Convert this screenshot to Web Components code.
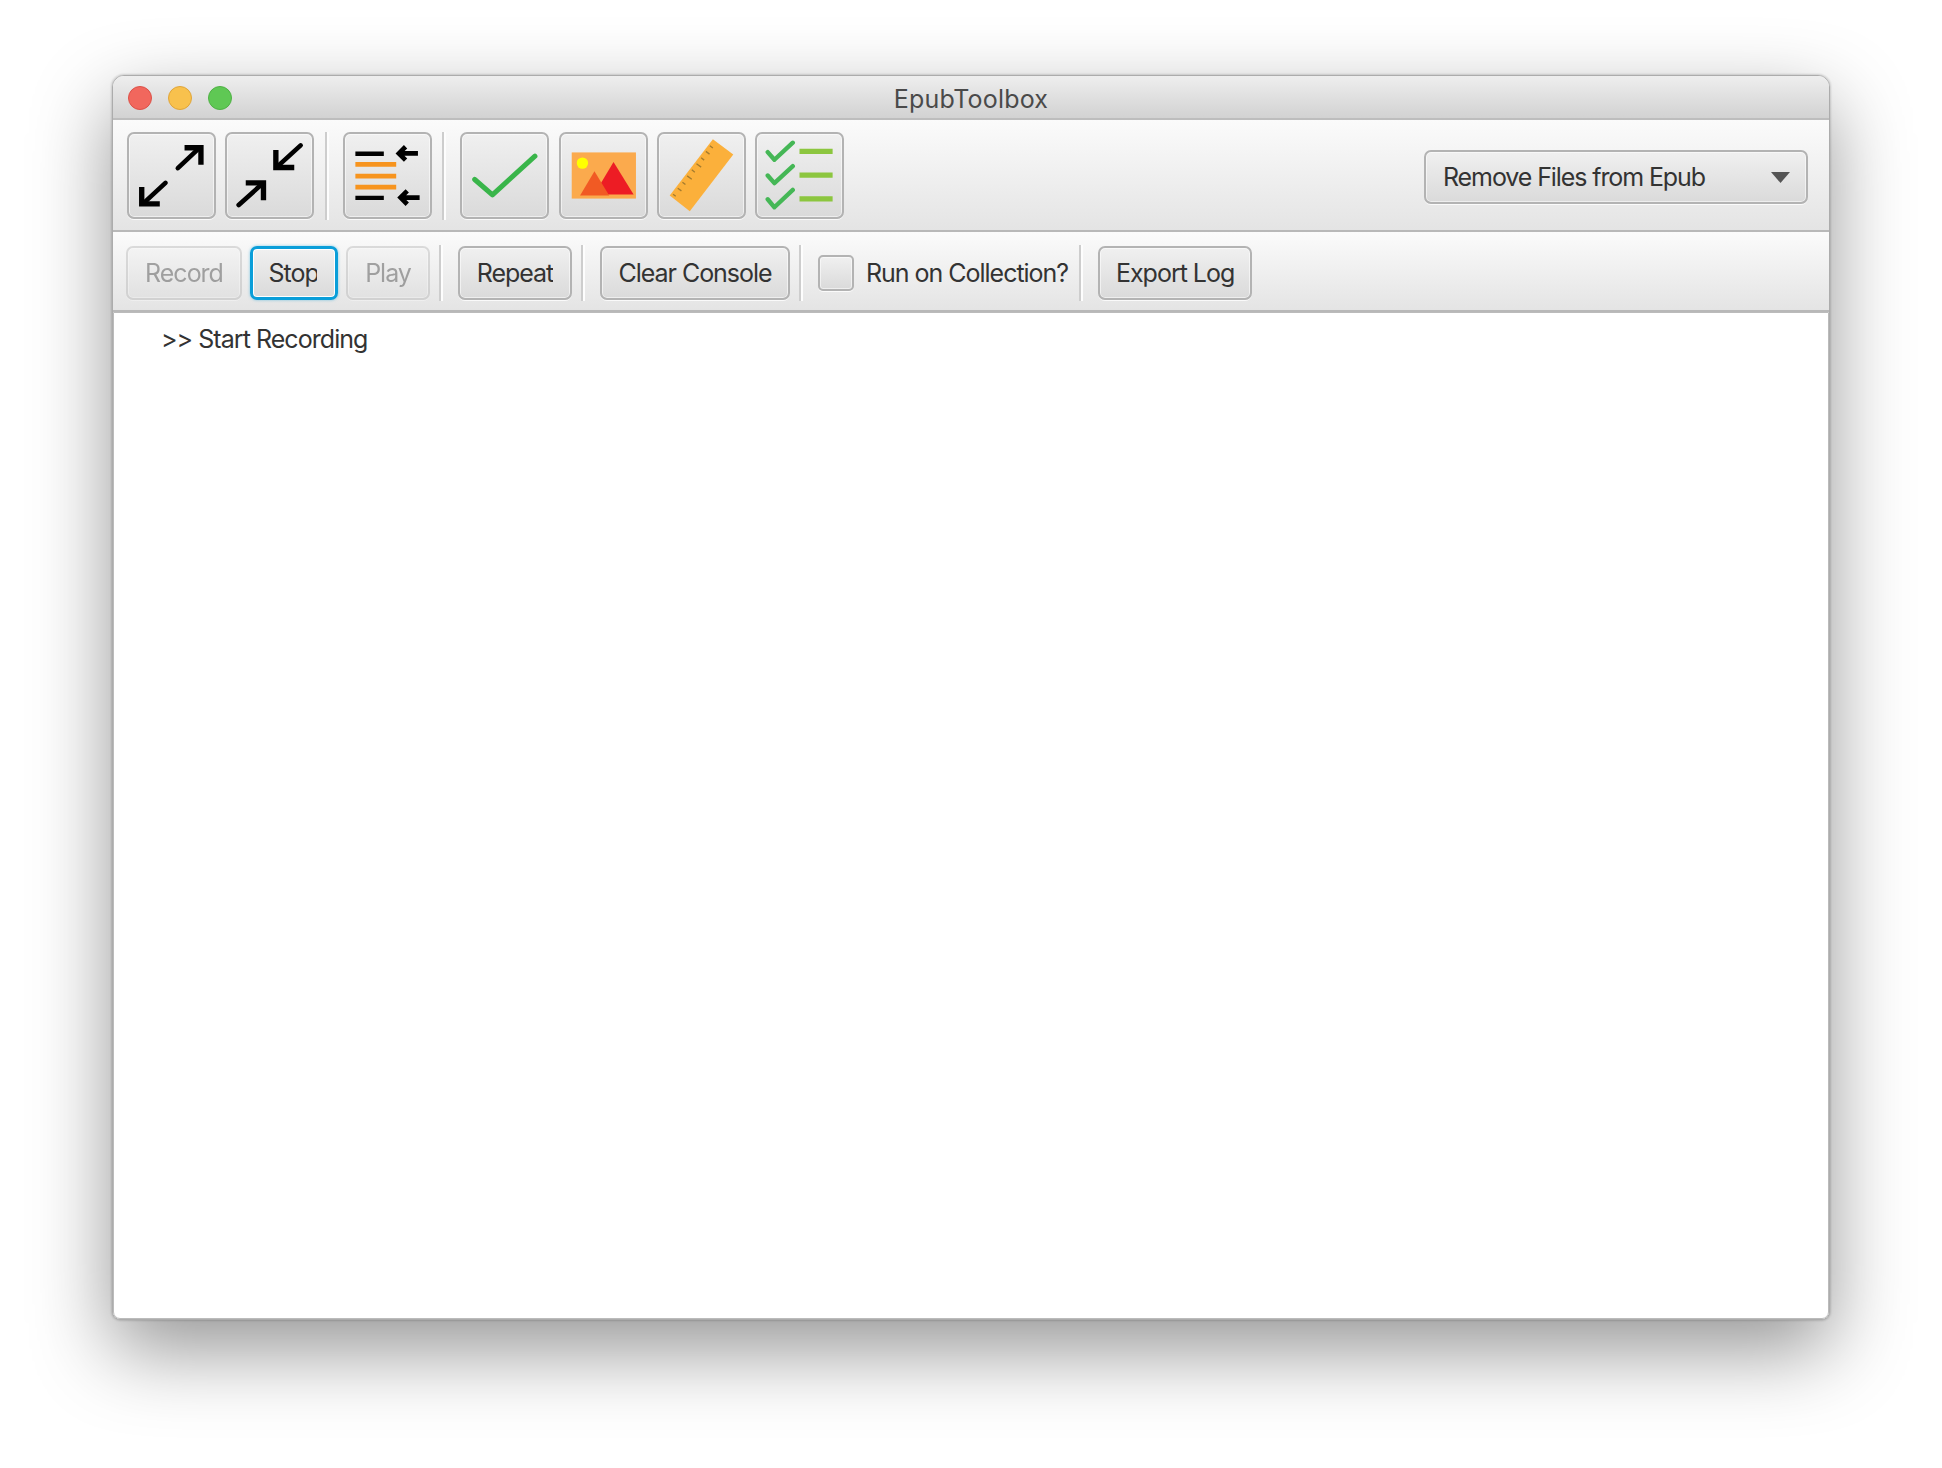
<!DOCTYPE html>
<html>
<head>
<meta charset="utf-8">
<title>EpubToolbox</title>
<style>
  html, body { margin: 0; background: #fff; }
  body {
    width: 1942px;
    height: 1468px;
    padding: 75px 0 0 112px;
    box-sizing: border-box;
    overflow: hidden;
    font-family: Inter, "Liberation Sans", sans-serif;
    font-size: 25px;
    letter-spacing: -1.02px;
    color: #333;
  }
</style>
</head>
<body>
<app-window title-text="EpubToolbox">
  <tool-bar slot="bar" class="icons">
    <tool-button>
      <svg viewBox="0 0 266 260" fill="none" stroke="#000" stroke-width="14" stroke-linecap="round"><path d="M152 108L218 46"/><path d="M172 47H221V98" stroke-width="16" stroke-linecap="butt"/><path d="M115 152L48 214"/><path d="M44 164V215H98" stroke-width="16" stroke-linecap="butt"/></svg>
    </tool-button>
    <tool-button>
      <svg viewBox="0 0 266 260" fill="none" stroke="#000" stroke-width="14" stroke-linecap="round"><path d="M226 40L158 102"/><path d="M152 54V106H207" stroke-width="16" stroke-linecap="butt"/><path d="M41 218L108 158"/><path d="M62 152H115V204" stroke-width="16" stroke-linecap="butt"/></svg>
    </tool-button>
    <fx-separator></fx-separator>
    <tool-button>
      <svg viewBox="0 0 266 260" fill="none" stroke="#000" stroke-width="13"><path d="M37 65H122M37 197H122"/><path d="M37 97H159M37 132H159M37 165H159" stroke="#f7941e" stroke-width="14"/><path d="M170 64H224M187 44L167 64L187 84M174 196H229M192 176L172 196L192 216" stroke-width="14"/></svg>
    </tool-button>
    <fx-separator></fx-separator>
    <tool-button>
      <svg viewBox="0 0 266 260" fill="none" stroke="#39b54a" stroke-width="15" stroke-linecap="round" stroke-linejoin="round"><path d="M44 142L97 188L224 72"/></svg>
    </tool-button>
    <tool-button>
      <svg viewBox="0 0 266 260"><rect x="38" y="61" width="192" height="138" fill="#fbaa4d"/><circle cx="70" cy="93" r="17" fill="#ff0"/><path d="M163 90L223 187H105Z" fill="#ed1c24"/><path d="M106 117L150 190H63Z" fill="#f15a24"/></svg>
    </tool-button>
    <tool-button>
      <svg viewBox="0 0 266 260"><path d="M167 22L228 67L98 237L38 190Z" fill="#fbb03b"/><path d="M48 186L56 192M62 168L73 176M76 150L85 157M90 131L104 141M104 113L113 120M118 95L132 105M132 77L141 84M146 58L157 66M158 41L167 48" stroke="#a57c2e" stroke-width="4"/></svg>
    </tool-button>
    <tool-button>
      <svg viewBox="0 0 266 260" fill="none" stroke-linecap="round" stroke-linejoin="round"><path d="M38 60L58 83L113 32M38 130L58 153L113 102M38 201L58 225L113 173" stroke="#45b756" stroke-width="13"/><path d="M133 58H232M133 129H232M133 200H232" stroke="#8cc63f" stroke-width="16" stroke-linecap="butt"/></svg>
    </tool-button>
    <fx-combo>Remove Files from Epub</fx-combo>
  </tool-bar>
  <tool-bar slot="bar" class="controls">
    <fx-button disabled width="116">Record</fx-button>
    <fx-button focused width="88" clip="48">Stop</fx-button>
    <fx-button disabled width="84">Play</fx-button>
    <fx-separator></fx-separator>
    <fx-button width="114">Repeat</fx-button>
    <fx-separator></fx-separator>
    <fx-button width="190">Clear Console</fx-button>
    <fx-separator></fx-separator>
    <fx-check>Run on Collection?</fx-check>
    <fx-separator></fx-separator>
    <fx-button width="154">Export Log</fx-button>
  </tool-bar>
  <console-view>&gt;&gt; Start Recording</console-view>
</app-window>

<script>
class AppWindow extends HTMLElement {
  constructor() {
    super().attachShadow({ mode: "open" }).innerHTML = `
    <style>
      :host {
        display: flex;
        flex-direction: column;
        width: 1718px;
        height: 1245px;
        box-sizing: border-box;
        border: 1px solid #acacac;
        border-radius: 12px 12px 8px 8px;
        background: #fff;
        box-shadow: 0 30px 80px 0 rgba(0, 0, 0, 0.42), 0 0 2px 1px rgba(0, 0, 0, 0.14);
      }
      .title {
        flex: none;
        height: 42px;
        display: flex;
        align-items: center;
        justify-content: center;
        border-bottom: 2px solid #bdbdbd;
        border-radius: 11px 11px 0 0;
        background: linear-gradient(#eeeeee, #d2d2d2);
        position: relative;
        color: #4a4a4a;
        letter-spacing: 0.2px;
      }
      .lights {
        position: absolute;
        left: 15px;
        top: 10px;
        display: flex;
        gap: 16px;
      }
      .lights i {
        display: block;
        width: 24px;
        height: 24px;
        box-sizing: border-box;
        border-radius: 50%;
        border: 1px solid;
      }
      .close { background: #f1675d; border-color: #dc5148 !important; }
      .min { background: #f8c14d; border-color: #e0a53a !important; }
      .max { background: #5fc854; border-color: #4fb145 !important; }
      .title span { position: relative; top: 2px; }
    </style>
    <div class="title">
      <div class="lights"><i class="close"></i><i class="min"></i><i class="max"></i></div>
      <span></span>
    </div>
    <slot name="bar"></slot>
    <slot></slot>
    `;
  }
  connectedCallback() {
    this.shadowRoot.querySelector("span").textContent = this.getAttribute("title-text");
  }
}
customElements.define("app-window", AppWindow);

class ToolBar extends HTMLElement {
  constructor() {
    super().attachShadow({ mode: "open" }).innerHTML = `
    <style>
      :host {
        display: flex;
        flex: none;
        box-sizing: border-box;
        align-items: center;
        border-bottom: 2px solid #b8b8b8;
        background: linear-gradient(#fbfbfb, #e4e4e4);
      }
      :host(.icons) {
        height: 112px;
        gap: 9.3px;
        padding: 1px 21px 0 14px;
        --sep-right: 5px;
        --sep-height: 88px;
      }
      :host(.controls) {
        height: 80px;
        gap: 8px;
        padding: 4px 21px 0 13px;
        --sep-right: 7px;
        --sep-height: 56px;
      }
    </style>
    <slot></slot>
    `;
  }
}
customElements.define("tool-bar", ToolBar);

class ToolButton extends HTMLElement {
  constructor() {
    super().attachShadow({ mode: "open" }).innerHTML = `
    <style>
      :host {
        display: block;
        flex: none;
        width: 89px;
        height: 87px;
        box-sizing: border-box;
        border: 2px solid #b3b3b3;
        border-radius: 7px;
        background: linear-gradient(#f0f0f0, #dadada);
        box-shadow: inset 0 0 0 1px rgba(255, 255, 255, 0.55), 0 1px 0 rgba(255, 255, 255, 0.8);
      }
      ::slotted(svg) {
        display: block;
        width: 89px;
        height: 87px;
        margin: -2px;
        filter: blur(0.7px);
      }
    </style>
    <slot></slot>
    `;
  }
}
customElements.define("tool-button", ToolButton);

class FxButton extends HTMLElement {
  constructor() {
    super().attachShadow({ mode: "open" }).innerHTML = `
    <style>
      :host {
        display: flex;
        flex: none;
        align-items: center;
        justify-content: center;
        height: 54px;
        box-sizing: border-box;
        border: 2px solid #b3b3b3;
        border-radius: 7px;
        background: linear-gradient(#f0f0f0, #dadada);
        box-shadow: inset 0 0 0 1px rgba(255, 255, 255, 0.55), 0 1px 0 rgba(255, 255, 255, 0.8);
        white-space: nowrap;
      }
      :host([disabled]) { opacity: 0.42; }
      :host([focused]) {
        border: 3px solid #0a9ed9;
        box-shadow: 0 0 3px rgba(10, 158, 217, 0.5), inset 0 0 0 1px #fff;
      }
      span { display: block; overflow: hidden; }
    </style>
    <span><slot></slot></span>
    `;
  }
  connectedCallback() {
    this.style.width = this.getAttribute("width") + "px";
    if (this.hasAttribute("clip")) {
      const label = this.shadowRoot.querySelector("span");
      label.style.width = this.getAttribute("clip") + "px";
      label.style.marginRight = "3px";
    }
  }
}
customElements.define("fx-button", FxButton);

class FxSeparator extends HTMLElement {
  constructor() {
    super().attachShadow({ mode: "open" }).innerHTML = `
    <style>
      :host {
        display: block;
        flex: none;
        box-sizing: border-box;
        width: 4px;
        height: var(--sep-height);
        margin: 0 var(--sep-right) 0 1px;
        border-left: 2px solid #cdcdcd;
        border-right: 2px solid #fdfdfd;
      }
    </style>
    `;
  }
}
customElements.define("fx-separator", FxSeparator);

class FxCheck extends HTMLElement {
  constructor() {
    super().attachShadow({ mode: "open" }).innerHTML = `
    <style>
      :host {
        display: flex;
        flex: none;
        align-items: center;
        gap: 12px;
        margin-right: 2px;
        white-space: nowrap;
      }
      i {
        display: block;
        width: 36px;
        height: 36px;
        box-sizing: border-box;
        border: 2px solid #b3b3b3;
        border-radius: 5px;
        background: linear-gradient(#f0f0f0, #dadada);
        box-shadow: inset 0 0 0 1px rgba(255, 255, 255, 0.55), 0 1px 0 rgba(255, 255, 255, 0.8);
      }
    </style>
    <i></i><slot></slot>
    `;
  }
}
customElements.define("fx-check", FxCheck);

class FxCombo extends HTMLElement {
  constructor() {
    super().attachShadow({ mode: "open" }).innerHTML = `
    <style>
      :host {
        display: flex;
        flex: none;
        align-items: center;
        justify-content: space-between;
        width: 384px;
        height: 54px;
        margin: 3px 0 0 auto;
        padding: 0 16px 0 17px;
        box-sizing: border-box;
        border: 2px solid #b3b3b3;
        border-radius: 7px;
        background: linear-gradient(#f0f0f0, #dadada);
        box-shadow: inset 0 0 0 1px rgba(255, 255, 255, 0.55), 0 1px 0 rgba(255, 255, 255, 0.8);
        white-space: nowrap;
        letter-spacing: -1.1px;
      }
      svg { display: block; width: 19px; height: 11px; }
    </style>
    <slot></slot>
    <svg viewBox="0 0 19 11"><path d="M0 0H19L9.5 11Z" fill="#555"/></svg>
    `;
  }
}
customElements.define("fx-combo", FxCombo);

class ConsoleView extends HTMLElement {
  constructor() {
    super().attachShadow({ mode: "open" }).innerHTML = `
    <style>
      :host {
        display: block;
        flex: 1;
        padding: 11px 0 0 47px;
        line-height: 30px;
        letter-spacing: -0.95px;
        background: #fff;
        border: 1px solid #bbbbbb;
        border-radius: 0 0 7px 7px;
      }
    </style>
    <slot></slot>
    `;
  }
}
customElements.define("console-view", ConsoleView);
</script>
</body>
</html>
